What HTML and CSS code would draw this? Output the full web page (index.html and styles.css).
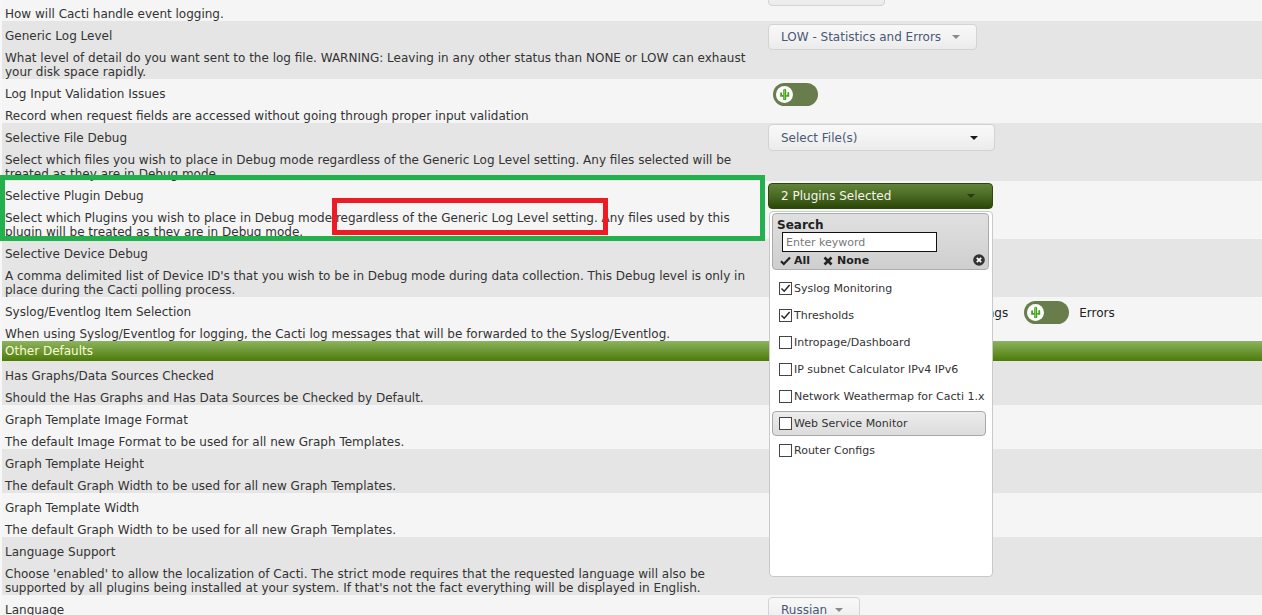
FILE: index.html
```html
<!DOCTYPE html>
<html lang="en">
<head>
<meta charset="utf-8">
<title>Cacti Settings</title>
<link rel="stylesheet" href="styles.css">
</head>
<body>
<div class="page">
  <div class="row odd">
    <div class="label"><div class="name">Log File Destination</div><div class="desc">How will Cacti handle event logging.</div></div>
    <div class="ctrl pt3"><div class="sel w117"><span>Logfile Only</span><span class="caret"></span></div></div>
  </div>
  <div class="row even">
    <div class="label"><div class="name">Generic Log Level</div><div class="desc">What level of detail do you want sent to the log file. WARNING: Leaving in any other status than NONE or LOW can exhaust your disk space rapidly.</div></div>
    <div class="ctrl pt3"><div class="sel w209"><span>LOW - Statistics and Errors</span><span class="caret"></span></div></div>
  </div>
  <div class="row odd">
    <div class="label"><div class="name">Log Input Validation Issues</div><div class="desc">Record when request fields are accessed without going through proper input validation</div></div>
    <div class="ctrl pt4 pl5"><div class="tog"><span class="knob"><svg viewBox="0 0 17 17" width="17" height="17"><path d="M7.2 4.2a1.5 1.5 0 0 1 3 0V14H7.2z" fill="#43a020"/><path d="M4.2 7.2a0.9 0.9 0 0 1 1.8 0V9h1.6v1.8H4.2z" fill="#43a020"/><path d="M10.2 9h1.2V6.8a0.9 0.9 0 0 1 1.8 0v3.9h-3z" fill="#43a020"/><path d="M8 3.6h0.9V13.6H8z" fill="#86d450"/></svg></span></div></div>
  </div>
  <div class="row even">
    <div class="label"><div class="name">Selective File Debug</div><div class="desc">Select which files you wish to place in Debug mode regardless of the Generic Log Level setting. Any files selected will be treated as they are in Debug mode.</div></div>
    <div class="ctrl pt1"><div class="sel w227 h27"><span>Select File(s)</span><span class="caret dark"></span></div></div>
  </div>
  <div class="row odd">
    <div class="label"><div class="name">Selective Plugin Debug</div><div class="desc">Select which Plugins you wish to place in Debug mode regardless of the Generic Log Level setting. Any files used by this plugin will be treated as they are in Debug mode.</div></div>
    <div class="ctrl pt2 anchor">
      <div class="msbtn"><span>2 Plugins Selected</span><span class="caret green"></span></div>
      <div class="mspanel">
        <div class="mshead">
          <div class="mstitle">Search</div>
          <div class="msinput"><span class="ph">Enter keyword</span></div>
          <div class="mslinks">
            <span class="lnk"><svg width="11" height="10" viewBox="0 0 11 10"><path d="M1 5.2l2.8 2.8L10 1.6" fill="none" stroke="#222" stroke-width="2.2"/></svg><b>All</b></span>
            <span class="lnk none"><svg width="10" height="10" viewBox="0 0 10 10"><path d="M1.5 1.5l7 7M8.5 1.5l-7 7" stroke="#222" stroke-width="2.6"/></svg><b>None</b></span>
            <span class="close"><svg width="12" height="12" viewBox="0 0 12 12"><circle cx="6" cy="6" r="5.8" fill="#333"/><path d="M3.8 3.8l4.4 4.4M8.2 3.8l-4.4 4.4" stroke="#fff" stroke-width="1.8"/></svg></span>
          </div>
        </div>
        <ul class="mslist">
          <li><span class="cb"><svg width="11" height="11" viewBox="0 0 11 11"><path d="M1.5 5.5l2.7 2.8L9.6 2" fill="none" stroke="#222" stroke-width="1.4"/></svg></span>Syslog Monitoring</li>
          <li><span class="cb"><svg width="11" height="11" viewBox="0 0 11 11"><path d="M1.5 5.5l2.7 2.8L9.6 2" fill="none" stroke="#222" stroke-width="1.4"/></svg></span>Thresholds</li>
          <li><span class="cb"></span>Intropage/Dashboard</li>
          <li><span class="cb"></span>IP subnet Calculator IPv4 IPv6</li>
          <li><span class="cb"></span>Network Weathermap for Cacti 1.x</li>
          <li class="hover"><span class="cb"></span>Web Service Monitor</li>
          <li><span class="cb"></span>Router Configs</li>
        </ul>
      </div>
    </div>
  </div>
  <div class="row even">
    <div class="label"><div class="name">Selective Device Debug</div><div class="desc">A comma delimited list of Device ID's that you wish to be in Debug mode during data collection. This Debug level is only in place during the Cacti polling process.</div></div>
    <div class="ctrl pt3"></div>
  </div>
  <div class="row odd">
    <div class="label"><div class="name">Syslog/Eventlog Item Selection</div><div class="desc">When using Syslog/Eventlog for logging, the Cacti log messages that will be forwarded to the Syslog/Eventlog.</div></div>
    <div class="ctrl pt4">
      <div class="togs">
        <div class="tog"><span class="knob"><svg viewBox="0 0 17 17" width="17" height="17"><path d="M7.2 4.2a1.5 1.5 0 0 1 3 0V14H7.2z" fill="#43a020"/><path d="M4.2 7.2a0.9 0.9 0 0 1 1.8 0V9h1.6v1.8H4.2z" fill="#43a020"/><path d="M10.2 9h1.2V6.8a0.9 0.9 0 0 1 1.8 0v3.9h-3z" fill="#43a020"/><path d="M8 3.6h0.9V13.6H8z" fill="#86d450"/></svg></span></div><span class="tl">Notices</span>
        <div class="tog"><span class="knob"><svg viewBox="0 0 17 17" width="17" height="17"><path d="M7.2 4.2a1.5 1.5 0 0 1 3 0V14H7.2z" fill="#43a020"/><path d="M4.2 7.2a0.9 0.9 0 0 1 1.8 0V9h1.6v1.8H4.2z" fill="#43a020"/><path d="M10.2 9h1.2V6.8a0.9 0.9 0 0 1 1.8 0v3.9h-3z" fill="#43a020"/><path d="M8 3.6h0.9V13.6H8z" fill="#86d450"/></svg></span></div><span class="tl">Warnings</span>
        <div class="tog"><span class="knob"><svg viewBox="0 0 17 17" width="17" height="17"><path d="M7.2 4.2a1.5 1.5 0 0 1 3 0V14H7.2z" fill="#43a020"/><path d="M4.2 7.2a0.9 0.9 0 0 1 1.8 0V9h1.6v1.8H4.2z" fill="#43a020"/><path d="M10.2 9h1.2V6.8a0.9 0.9 0 0 1 1.8 0v3.9h-3z" fill="#43a020"/><path d="M8 3.6h0.9V13.6H8z" fill="#86d450"/></svg></span></div><span class="tl">Errors</span>
      </div>
    </div>
  </div>
  <div class="section">Other Defaults</div>
  <div class="row even">
    <div class="label"><div class="name">Has Graphs/Data Sources Checked</div><div class="desc">Should the Has Graphs and Has Data Sources be Checked by Default.</div></div>
    <div class="ctrl"></div>
  </div>
  <div class="row odd">
    <div class="label"><div class="name">Graph Template Image Format</div><div class="desc">The default Image Format to be used for all new Graph Templates.</div></div>
    <div class="ctrl"></div>
  </div>
  <div class="row even">
    <div class="label"><div class="name">Graph Template Height</div><div class="desc">The default Graph Width to be used for all new Graph Templates.</div></div>
    <div class="ctrl"></div>
  </div>
  <div class="row odd">
    <div class="label"><div class="name">Graph Template Width</div><div class="desc">The default Graph Width to be used for all new Graph Templates.</div></div>
    <div class="ctrl"></div>
  </div>
  <div class="row even">
    <div class="label"><div class="name">Language Support</div><div class="desc">Choose 'enabled' to allow the localization of Cacti. The strict mode requires that the requested language will also be supported by all plugins being installed at your system. If that's not the fact everything will be displayed in English.</div></div>
    <div class="ctrl"></div>
  </div>
  <div class="row odd">
    <div class="label"><div class="name">Language</div><div class="desc">Default language for this system.</div></div>
    <div class="ctrl pt2"><div class="sel w92"><span>Russian</span><span class="caret"></span></div></div>
  </div>
</div>
<div class="mark green-mark"></div>
<div class="mark red-mark"></div>
</body>
</html>
```
FILE: styles.css
```css
* { box-sizing: border-box; }
html, body { height: 100%; }
body {
  margin: 0;
  background: #f7f7f7;
  font-family: "DejaVu Sans", Verdana, sans-serif;
  font-size: 12px;
  color: #333;
  overflow: hidden;
}
.page { margin: -23px 0 0 2px; }
.row { display: grid; grid-template-columns: 766px 1fr; }
.odd { background: #f5f5f5; }
.even { background: #e5e5e5; }
.label { padding: 8px 3px 0 3px; }
.name { line-height: 14px; margin-bottom: 8px; white-space: nowrap; }
.desc { line-height: 14px; }
.ctrl { padding-top: 3px; }
.pt1 { padding-top: 1px; }
.pt2 { padding-top: 2px; }
.pt3 { padding-top: 3px; }
.pt4 { padding-top: 4px; }
.pl5 { padding-left: 5px; }
.anchor { position: relative; }

.sel {
  display: flex;
  align-items: center;
  justify-content: space-between;
  height: 26px;
  padding: 0 16px 0 12px;
  border: 1px solid #d3d3d3;
  border-radius: 4px;
  background: linear-gradient(#f8f8f8 0%, #f3f3f3 50%, #ebebeb 100%);
  color: #4a5876;
  white-space: nowrap;
}
.w117 { width: 117px; }
.w209 { width: 209px; }
.w227 { width: 227px; }
.w92 { width: 92px; }
.h27 { height: 27px; }
.caret {
  width: 0; height: 0;
  border-left: 4px solid transparent;
  border-right: 4px solid transparent;
  border-top: 4px solid #8a8a8a;
}
.caret.dark { border-top-color: #1a1a1a; }
.caret.green { border-top-color: #2c3a1c; }

.msbtn {
  display: flex;
  align-items: center;
  justify-content: space-between;
  width: 225px;
  height: 26px;
  padding: 0 17px 0 12px;
  border: 1px solid #2f4712;
  border-radius: 4px;
  background: linear-gradient(#62833a 0%, #4a6a22 50%, #2c4709 100%);
  color: #f4f4ee;
}
.mspanel {
  position: absolute;
  z-index: 10;
  top: 30px;
  left: 1px;
  width: 224px;
  height: 366px;
  padding: 1px 2px;
  background: #fff;
  border: 1px solid #c9c9c9;
  border-radius: 4px;
}
.mshead {
  width: 217px;
  padding: 4px 3px 0 4px;
  border: 1px solid #ababab;
  border-radius: 4px;
  background: linear-gradient(#e0e0e0, #cfcfcf);
  color: #222;
}
.mstitle { font-weight: bold; line-height: 14px; }
.msinput {
  margin-left: 5px;
  width: 155px;
  height: 20px;
  border: 1px solid #111;
  background: #fff;
  padding-left: 3px;
  line-height: 18px;
}
.ph { color: #7a7a7a; font-size: 11px; }
.mslinks {
  display: flex;
  align-items: center;
  height: 17px;
  padding-left: 3px;
}
.lnk { display: flex; align-items: center; gap: 3px; }
.lnk b { font-weight: bold; font-size: 11px; }
.lnk.none { margin-left: 13px; gap: 4px; }
.close { margin-left: auto; display: flex; margin-top: -2px; }

.mslist { list-style: none; margin: 6px 4px 0 0; padding: 0; }
.mslist li {
  display: flex;
  align-items: center;
  gap: 2px;
  height: 25px;
  margin-bottom: 2px;
  padding-left: 6px;
  border: 1px solid transparent;
  border-radius: 4px;
  color: #333;
  font-size: 11px;
  white-space: nowrap;
}
.mslist li.hover {
  border-color: #a8a8a8;
  background: linear-gradient(#ececec, #dcdcdc);
}
.cb {
  display: inline-flex;
  align-items: center;
  justify-content: center;
  width: 13px;
  height: 13px;
  border: 1px solid #444;
  background: #fff;
  flex: none;
}

.tog {
  width: 45px;
  height: 23px;
  padding: 3px;
  border-radius: 12px;
  background: #687d4b;
  flex: none;
}
.knob {
  display: block;
  width: 17px;
  height: 17px;
  border-radius: 50%;
  background: #fff;
}
.knob svg { display: block; }
.togs { display: flex; align-items: center; padding-left: 14px; }
.tl { margin: 0 16px 0 10px; white-space: nowrap; color: #222; }

.section {
  height: 20px;
  line-height: 20px;
  padding-left: 3px;
  background: linear-gradient(#8db35f, #4c7b08);
  color: #fbfbd6;
}

.mark { position: absolute; }
.green-mark {
  left: 0; top: 175px;
  width: 765px; height: 66px;
  border: 5px solid #22b14c;
}
.red-mark {
  left: 332px; top: 198px;
  width: 276px; height: 37px;
  border: 5px solid #ed1c24;
}
```
